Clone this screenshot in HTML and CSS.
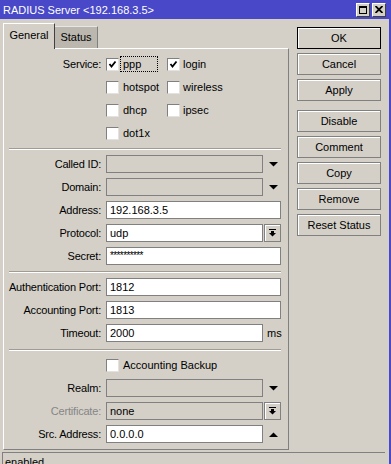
FILE: index.html
```html
<!DOCTYPE html>
<html lang="en">
<head>
  <meta charset="UTF-8" />
  <title>RADIUS Server</title>
  <link rel="stylesheet" href="styles.css">
</head>
<body>

  <div class="titlebar">
    <span class="title">RADIUS Server &lt;192.168.3.5&gt;</span>
    <div class="title-btns">
      <span class="tbtn">
        <svg width="8" height="8" viewBox="0 0 8 8"><rect x="0.5" y="0.5" width="7" height="7" fill="none" stroke="#000"/><rect x="0" y="0" width="8" height="2" fill="#000"/></svg>
      </span>
      <span class="tbtn">
        <svg width="8" height="7" viewBox="0 0 8 7"><path d="M0.5 0 L7.5 7 M7.5 0 L0.5 7" stroke="#000" stroke-width="1.8"/></svg>
      </span>
    </div>
  </div>

  <div class="window">
    <div class="main">
      <div class="left">
        <div class="tabs">
          <div class="tab active">General</div>
          <div class="tab">Status</div>
        </div>

        <div class="panel">
          <!-- service checkboxes -->
          <div class="row">
            <div class="label">Service:</div>
            <div class="opt">
              <span class="cb"><svg width="11" height="11" viewBox="0 0 11 11"><path d="M2.5 5 L4.5 7.5 L8.5 2.5" fill="none" stroke="#000" stroke-width="1.8"/></svg></span>
              <span class="txt focus">ppp</span>
            </div>
            <div class="opt col2">
              <span class="cb"><svg width="11" height="11" viewBox="0 0 11 11"><path d="M2.5 5 L4.5 7.5 L8.5 2.5" fill="none" stroke="#000" stroke-width="1.8"/></svg></span>
              <span class="txt">login</span>
            </div>
          </div>
          <div class="row">
            <div class="label"></div>
            <div class="opt"><span class="cb"></span><span class="txt">hotspot</span></div>
            <div class="opt col2"><span class="cb"></span><span class="txt">wireless</span></div>
          </div>
          <div class="row">
            <div class="label"></div>
            <div class="opt"><span class="cb"></span><span class="txt">dhcp</span></div>
            <div class="opt col2"><span class="cb"></span><span class="txt">ipsec</span></div>
          </div>
          <div class="row">
            <div class="label"></div>
            <div class="opt"><span class="cb"></span><span class="txt">dot1x</span></div>
          </div>

          <div class="sep sep1"></div>

          <div class="row">
            <div class="label">Called ID:</div>
            <div class="field short off"></div>
            <svg class="arrow" width="9" height="5" viewBox="0 0 9 5"><polygon points="0,0 9,0 4.5,4.5" fill="#000"/></svg>
          </div>
          <div class="row">
            <div class="label">Domain:</div>
            <div class="field short off"></div>
            <svg class="arrow" width="9" height="5" viewBox="0 0 9 5"><polygon points="0,0 9,0 4.5,4.5" fill="#000"/></svg>
          </div>
          <div class="row">
            <div class="label">Address:</div>
            <div class="field">192.168.3.5</div>
          </div>
          <div class="row">
            <div class="label">Protocol:</div>
            <div class="field short">udp</div>
            <span class="dropbtn">
              <svg width="7" height="8" viewBox="0 0 7 8"><rect x="0" y="0" width="7" height="1" fill="#000"/><rect x="2" y="2" width="3" height="2" fill="#000"/><polygon points="0,4 7,4 3.5,7.5" fill="#000"/></svg>
            </span>
          </div>
          <div class="row">
            <div class="label">Secret:</div>
            <div class="field secret">**********</div>
          </div>

          <div class="sep sep2"></div>

          <div class="row">
            <div class="label">Authentication Port:</div>
            <div class="field">1812</div>
          </div>
          <div class="row">
            <div class="label">Accounting Port:</div>
            <div class="field">1813</div>
          </div>
          <div class="row">
            <div class="label">Timeout:</div>
            <div class="field short">2000</div>
            <span class="unit">ms</span>
          </div>

          <div class="sep sep3"></div>

          <div class="row">
            <div class="label"></div>
            <div class="opt wide"><span class="cb"></span><span class="txt">Accounting Backup</span></div>
          </div>
          <div class="row">
            <div class="label">Realm:</div>
            <div class="field short off"></div>
            <svg class="arrow" width="9" height="5" viewBox="0 0 9 5"><polygon points="0,0 9,0 4.5,4.5" fill="#000"/></svg>
          </div>
          <div class="row">
            <div class="label disabled">Certificate:</div>
            <div class="field short off">none</div>
            <span class="dropbtn">
              <svg width="7" height="8" viewBox="0 0 7 8"><rect x="0" y="0" width="7" height="1" fill="#000"/><rect x="2" y="2" width="3" height="2" fill="#000"/><polygon points="0,4 7,4 3.5,7.5" fill="#000"/></svg>
            </span>
          </div>
          <div class="row">
            <div class="label">Src. Address:</div>
            <div class="field short">0.0.0.0</div>
            <svg class="arrow" width="9" height="5" viewBox="0 0 9 5"><polygon points="0,5 9,5 4.5,0.5" fill="#000"/></svg>
          </div>
        </div>
      </div>

      <div class="buttons">
        <div class="btn default">OK</div>
        <div class="btn">Cancel</div>
        <div class="btn">Apply</div>
        <div class="btn gap">Disable</div>
        <div class="btn">Comment</div>
        <div class="btn">Copy</div>
        <div class="btn">Remove</div>
        <div class="btn">Reset Status</div>
      </div>
    </div>

    <div class="statusbar">enabled</div>
  </div>

</body>
</html>
```

FILE: styles.css
```css
* {
  box-sizing: border-box;
}

body {
  margin: 0;
  width: 391px;
  height: 464px;
  overflow: hidden;
  background: #d4d0c8;
  font-family: "Liberation Sans", Arial, sans-serif;
  font-size: 11px;
  color: #000;
}

.titlebar {
  height: 19px;
  background: #4848c8;
  color: #fff;
  display: flex;
  align-items: center;
  justify-content: space-between;
  padding: 0 5px 0 3px;
  font-size: 11px;
}

.title-btns {
  display: flex;
  gap: 2px;
}

.tbtn {
  width: 14px;
  height: 14px;
  background: #d4d0c8;
  border: 1px solid;
  border-color: #fff #404040 #404040 #fff;
  display: flex;
  align-items: center;
  justify-content: center;
}

.window {
  height: 445px;
  border-right: 2px solid #4848c8;
}

.main {
  display: flex;
  height: 433px;
}

.left {
  width: 289px;
  padding: 4px 0 0 3px;
}

.tabs {
  display: flex;
  align-items: flex-end;
  height: 25px;
}

.tab {
  height: 22px;
  width: 43px;
  line-height: 21px;
  text-align: center;
  background: #bbb7af;
  border-top: 1px solid #e8e6e2;
  border-right: 1px solid #808080;
}

.tab.active {
  width: 52px;
  height: 26px;
  line-height: 22px;
  margin-bottom: -1px;
  background: #d4d0c8;
  border-top: 1px solid #fff;
  border-left: 1px solid #fff;
  border-right: 1px solid #404040;
  position: relative;
  z-index: 1;
}

.panel {
  width: 286px;
  height: 402px;
  display: flex;
  flex-direction: column;
  border: 1px solid;
  border-color: #fff #808080 #808080 #fff;
  padding-top: 1px;
}

.row {
  display: flex;
  align-items: center;
  height: 18px;
  flex-shrink: 0;
  margin-top: 5px;
}

.label {
  width: 97px;
  flex-shrink: 0;
  text-align: right;
  margin-right: 5px;
  letter-spacing: -0.2px;
  white-space: nowrap;
}

.label.disabled {
  color: #868686;
}

.opt {
  display: flex;
  align-items: center;
  width: 61px;
  flex-shrink: 0;
}

.opt.wide {
  width: auto;
}

.opt .txt {
  margin-left: 4px;
}

.opt.col2 .txt {
  margin-left: 3px;
}

.opt .txt.focus {
  margin-left: 1px;
  width: 38px;
  height: 16px;
  line-height: 14px;
  padding: 0 2px;
  border: 1px dotted #000;
}

.cb {
  width: 13px;
  height: 13px;
  background: #fff;
  border: 1px solid;
  border-color: #808080 #e4e2de #e4e2de #808080;
  display: flex;
  align-items: center;
  justify-content: center;
}

.sep {
  height: 2px;
  flex-shrink: 0;
  margin: 0 7px 0 5px;
  border-top: 1px solid #a09c94;
  border-bottom: 1px solid #fff;
}

.sep1 {
  margin-top: 6px;
}

.sep2 {
  margin-top: 6px;
}

.sep3 {
  margin-top: 7px;
}

.field {
  width: 175px;
  height: 18px;
  flex-shrink: 0;
  border: 1px solid #808080;
  background: #fff;
  padding-left: 3px;
  line-height: 16px;
  white-space: nowrap;
  overflow: hidden;
}

.field.short {
  width: 157px;
}

.field.off {
  background: #d4d0c8;
}

.field.secret {
  letter-spacing: -0.6px;
  font-size: 10px;
}

.arrow {
  margin-left: 6px;
}

.dropbtn {
  width: 17px;
  height: 18px;
  margin-left: 1px;
  border: 1px solid #808080;
  box-shadow: inset 1px 1px #fff;
  display: flex;
  align-items: center;
  justify-content: center;
}

.unit {
  margin-left: 4px;
}

.buttons {
  width: 84px;
  margin-left: 8px;
  padding-top: 8px;
  display: flex;
  flex-direction: column;
}

.btn {
  height: 22px;
  margin-bottom: 4px;
  border: 1px solid #808080;
  box-shadow: inset 1px 1px #fff;
  text-align: center;
  line-height: 20px;
}

.btn.default {
  border-color: #000;
}

.btn.gap {
  margin-top: 5px;
}

.statusbar {
  margin-left: 2px;
  width: 383px;
  height: 20px;
  border-top: 1px solid #808080;
  border-left: 1px solid #808080;
  padding: 3px 0 0 2px;
}
```
